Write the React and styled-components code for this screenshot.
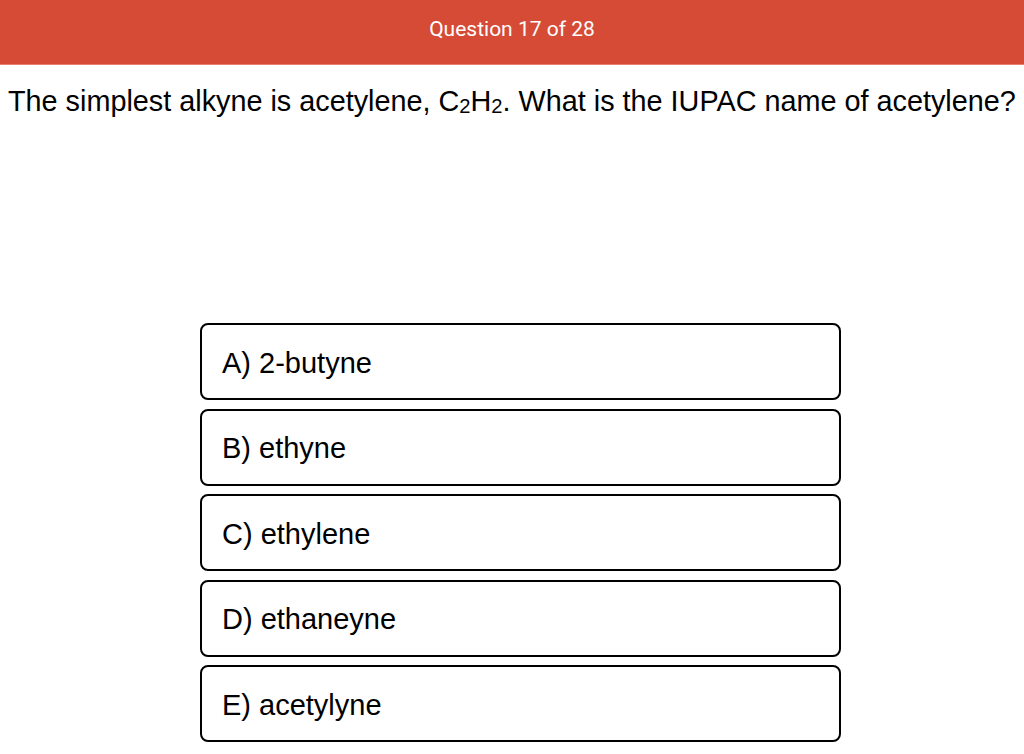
import React from "react";
import styled, { createGlobalStyle } from "styled-components";

const Global = createGlobalStyle`
  html, body { margin: 0; padding: 0; background: #ffffff; }
  body { font-family: "Liberation Sans", Arial, sans-serif; color: #000; }
`;

const Page = styled.div`
  display: flex;
  flex-direction: column;
  min-height: 754px;
`;

const Header = styled.header`
  height: 65px;
  background: #d64b36;
  border-bottom: 1px solid #e8806f;
  display: flex;
  align-items: center;
  justify-content: center;
  box-sizing: border-box;
`;

const HeaderTitle = styled.h1`
  margin: 0;
  font-family: Roboto, "Helvetica Neue", sans-serif;
  font-weight: 400;
  font-size: 21px;
  color: #ffffff;
  padding-bottom: 6px;
`;

const Question = styled.p`
  margin: 19px 0 0 8px;
  font-size: 28.8px;
  line-height: 34px;
  white-space: nowrap;
`;

const Sub = styled.sub`
  font-size: 0.7em;
  vertical-align: -0.12em;
  line-height: 0;
`;

const Options = styled.div`
  display: flex;
  flex-direction: column;
  gap: 8.5px;
  margin: 205px 0 0 200px;
  width: 641px;
`;

const Option = styled.button`
  height: 77px;
  box-sizing: border-box;
  border: 2px solid #000;
  border-radius: 8px;
  background: #fff;
  display: flex;
  align-items: center;
  padding: 3px 0 0 20px;
  font-family: "Liberation Sans", Arial, sans-serif;
  font-size: 29px;
  color: #000;
  text-align: left;
  cursor: pointer;
`;

const options = [
  "A) 2-butyne",
  "B) ethyne",
  "C) ethylene",
  "D) ethaneyne",
  "E) acetylyne",
];

export default function App() {
  return (
    <Page>
      <Global />
      <Header>
        <HeaderTitle>Question 17 of 28</HeaderTitle>
      </Header>
      <Question>
        The simplest alkyne is acetylene, C<Sub>2</Sub>H<Sub>2</Sub>. What is the IUPAC name of acetylene?
      </Question>
      <Options>
        {options.map((o) => (
          <Option key={o}>{o}</Option>
        ))}
      </Options>
    </Page>
  );
}
